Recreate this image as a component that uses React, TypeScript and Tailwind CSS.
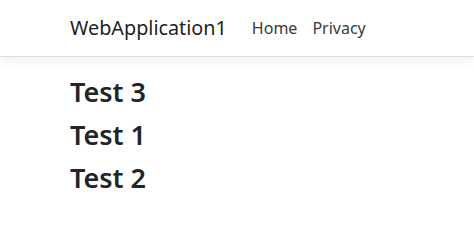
export default function App() {
    return (
        <div className="min-h-[225px] bg-white text-[#212529]" style={{ fontFamily: '"Noto Sans", "Open Sans", sans-serif' }}>
            <header className="h-[57px] border-b border-[#dee2e6] bg-white shadow-[0_4px_12px_rgba(0,0,0,0.06)]">
                <nav className="flex h-full items-center pl-[70px]">
                    <a className="mr-[25px] text-[19.8px] text-black/90">WebApplication1</a>
                    <ul className="flex gap-[15px] text-[16px] text-[#3a3a3a]">
                        <li>Home</li>
                        <li>Privacy</li>
                    </ul>
                </nav>
            </header>

            <main className="pl-[70px] pt-[17px]">
                <h1 className="mb-[8px] text-[27px] font-semibold leading-[35px]">Test 3</h1>
                <h1 className="mb-[8px] text-[27px] font-semibold leading-[35px]">Test 1</h1>
                <h1 className="mb-[8px] text-[27px] font-semibold leading-[35px]">Test 2</h1>
            </main>
        </div>
    )
}
